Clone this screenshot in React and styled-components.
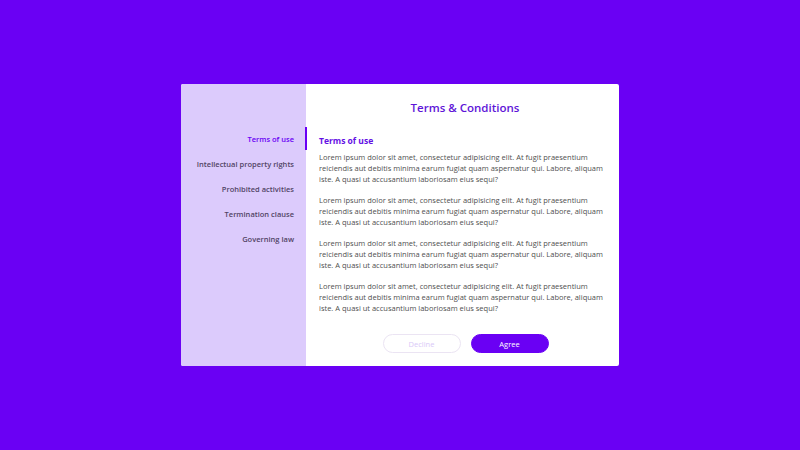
import React from "react";
import styled, { createGlobalStyle } from "styled-components";

const GlobalStyle = createGlobalStyle`
  html, body { margin: 0; padding: 0; }
  body {
    background: #6a00f4;
    font-family: "Open Sans", "Noto Sans", sans-serif;
  }
`;

const Page = styled.div`
  width: 800px;
  height: 450px;
  display: flex;
  align-items: center;
  justify-content: center;
`;

const Modal = styled.div`
  width: 438px;
  height: 282px;
  display: flex;
  background: #ffffff;
  border-radius: 2px;
  overflow: hidden;
`;

const Sidebar = styled.nav`
  width: 125px;
  flex-shrink: 0;
  background: #dccbfc;
  display: flex;
  flex-direction: column;
  gap: 2px;
  padding-top: 43px;
  box-sizing: border-box;
`;

const NavItem = styled.div`
  height: 23px;
  display: flex;
  align-items: center;
  justify-content: flex-end;
  padding-right: 11px;
  font-size: 7.5px;
  font-weight: 600;
  white-space: nowrap;
  color: ${(p) => (p.$active ? "#6a00f4" : "#524466")};
  border-right: 2px solid ${(p) => (p.$active ? "#6a00f4" : "transparent")};
  margin-right: -1px;
`;

const Content = styled.section`
  flex: 1;
  min-width: 0;
  display: flex;
  flex-direction: column;
  padding: 16px 14px 13px 13px;
  box-sizing: border-box;
`;

const Title = styled.h1`
  margin: 0 0 20px;
  padding-left: 6px;
  text-align: center;
  font-size: 11.5px;
  font-weight: 600;
  color: #5e14d8;
`;

const Heading = styled.h2`
  margin: 0 0 6px;
  font-size: 8.5px;
  font-weight: 700;
  color: #6410e4;
`;

const Paragraph = styled.p`
  margin: 0 0 10px;
  font-size: 7.5px;
  line-height: 11px;
  color: #4f4f4f;
`;

const Actions = styled.div`
  margin-top: auto;
  display: flex;
  justify-content: center;
  gap: 10px;
  padding-left: 7px;
`;

const Button = styled.button`
  width: 78px;
  height: 19px;
  border-radius: 10px;
  font-family: inherit;
  font-size: 7.5px;
  cursor: pointer;
  border: 1px solid ${(p) => (p.$primary ? "#6a00f4" : "#ebe4f3")};
  background: ${(p) => (p.$primary ? "#6a00f4" : "#ffffff")};
  color: ${(p) => (p.$primary ? "#ffffff" : "#d9c8f7")};
`;

const sections = [
  "Terms of use",
  "Intellectual property rights",
  "Prohibited activities",
  "Termination clause",
  "Governing law",
];

const lorem =
  "Lorem ipsum dolor sit amet, consectetur adipisicing elit. At fugit praesentium reiciendis aut debitis minima earum fugiat quam aspernatur qui. Labore, aliquam iste. A quasi ut accusantium laboriosam eius sequi?";

export default function App() {
  return (
    <>
      <GlobalStyle />
      <Page>
        <Modal>
          <Sidebar>
            {sections.map((s, i) => (
              <NavItem key={s} $active={i === 0}>
                {s}
              </NavItem>
            ))}
          </Sidebar>
          <Content>
            <Title>Terms &amp; Conditions</Title>
            <Heading>Terms of use</Heading>
            {[0, 1, 2, 3].map((i) => (
              <Paragraph key={i}>{lorem}</Paragraph>
            ))}
            <Actions>
              <Button>Decline</Button>
              <Button $primary>Agree</Button>
            </Actions>
          </Content>
        </Modal>
      </Page>
    </>
  );
}
